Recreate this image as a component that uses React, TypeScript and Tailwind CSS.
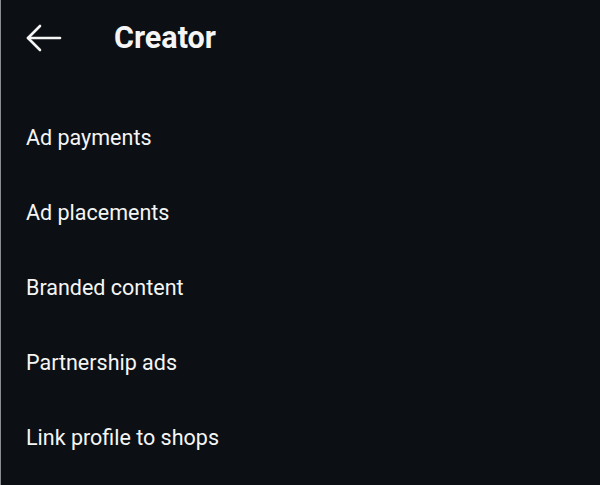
const items = ['Ad payments', 'Ad placements', 'Branded content', 'Partnership ads', 'Link profile to shops'];

function BackArrow() {
  return (
    <svg width="36" height="28" viewBox="0 0 36 28" fill="none" stroke="currentColor" strokeWidth="2.6" strokeLinecap="round" strokeLinejoin="round">
      <path d="M14 2 2 14l12 12" />
      <path d="M2 14h32" />
    </svg>
  );
}

export default function App() {
  return (
    <div className="h-[485px] w-[600px] overflow-hidden bg-[#0c1014] border-l border-[#8a8d91] text-[#f5f5f5] font-['Roboto',sans-serif]">
      <div className="flex h-[76px] items-center">
        <div className="flex w-[113px] items-center pl-[25px]">
          <BackArrow />
        </div>
        <h1 className="-mt-[1px] text-[30.5px] font-bold">Creator</h1>
      </div>
      <ul className="mt-[25px] pl-[25px]">
        {items.map((item) => (
          <li key={item} className="flex h-[75px] items-center text-[21.5px]">
            {item}
          </li>
        ))}
      </ul>
    </div>
  );
}
